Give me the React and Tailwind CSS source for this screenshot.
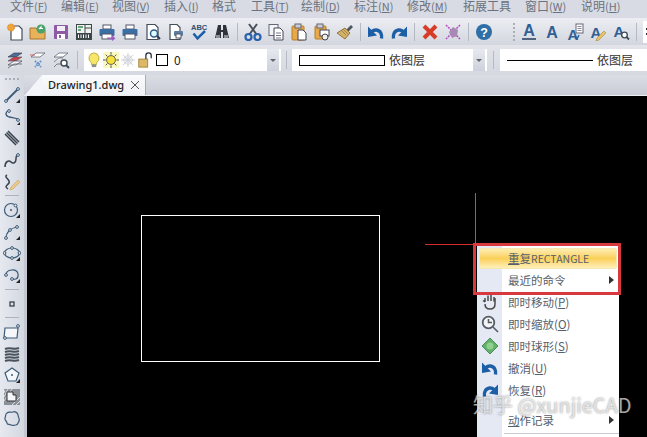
import React from 'react';

const FONT = 'font-["Noto_Sans_CJK_SC","Noto_Sans",sans-serif]';

const menus = [
    ['文件', 'F', 'w-[51px]'],
    ['编辑', 'E', 'w-[51px]'],
    ['视图', 'V', 'w-[52px]'],
    ['插入', 'I', 'w-[48px]'],
    ['格式', '', 'w-[39px]'],
    ['工具', 'T', 'w-[50px]'],
    ['绘制', 'D', 'w-[53px]'],
    ['标注', 'N', 'w-[53px]'],
    ['修改', 'M', 'w-[56px]'],
    ['拓展工具', '', 'w-[62px]'],
    ['窗口', 'W', 'w-[56px]'],
    ['说明', 'H', 'w-[50px]'],
];

const Svg = ({ children, size = 18 }) => (
    <svg width={size} height={size} viewBox="0 0 18 18" fill="none" className="shrink-0">
        {children}
    </svg>
);

const Sheet = ({ x = 5, y = 3, w = 10, h = 13 }) => (
    <path d={`M${x} ${y}h${w - 3}l3 3v${h - 3}h-${w}z`} fill="#fff" stroke="#444c58" strokeWidth="1.2" />
);

const Printer = ({ tone = '#3a6ea5' }) => (
    <>
        <rect x="5" y="2" width="8" height="4" fill="#fff" stroke="#556" />
        <rect x="1.5" y="6" width="15" height="7" rx="1" fill={tone} />
        <rect x="4" y="11" width="10" height="5" fill="#fff" stroke="#556" />
    </>
);

const icons = {
    newFile: (
        <Svg>
            <Sheet x={5} y={3} w={11} h={14} />
            <circle cx="5" cy="4.5" r="3.5" fill="#f0a43a" stroke="#d9822b" strokeDasharray="1.5 1" />
        </Svg>
    ),
    open: (
        <Svg>
            <path d="M1 5h6l2 2h7v9H1z" fill="#e8b25a" stroke="#a8742a" />
            <circle cx="12" cy="6" r="4.5" fill="#4aa36a" />
            <path d="M10 6l2-2v1.5h2" stroke="#fff" strokeWidth="1.2" />
        </Svg>
    ),
    save: (
        <Svg>
            <rect x="2" y="2" width="14" height="14" rx="1" fill="#8d5aa5" />
            <rect x="5" y="3" width="8" height="5" fill="#f3eef6" />
            <rect x="5" y="11" width="8" height="5" fill="#fff" />
            <rect x="7" y="12" width="2" height="3" fill="#8d5aa5" />
        </Svg>
    ),
    acis: (
        <Svg>
            <rect x="1.5" y="1.5" width="15" height="15" fill="#eef1ef" stroke="#3c4a48" />
            <path d="M3 4h5M3 7h3" stroke="#3a8a5a" strokeWidth="1.5" />
            <path d="M10 2v8M10 5h6" stroke="#3c4a48" />
            <rect x="2" y="10" width="14" height="6" fill="#39454a" />
            <path d="M3.5 15v-3.5M6 15v-3.5M8.5 15v-3.5M11 15v-3.5M13.5 15v-3.5" stroke="#fff" />
        </Svg>
    ),
    printTo: (
        <Svg>
            <Printer />
            <path d="M9 14.5h5v-2.5l3.5 3.5-3.5 2.500v-2h-5z" fill="#9a5fc0" />
        </Svg>
    ),
    print: <Svg><Printer /></Svg>,
    preview: (
        <Svg>
            <Sheet x={3} y={1.500} w={11} h={15} />
            <circle cx="10" cy="10.500" r="3.500" fill="#dff" stroke="#2f5e8c" strokeWidth="1.500" />
            <path d="M13 13l3 3" stroke="#2f3c4c" strokeWidth="2" />
        </Svg>
    ),
    pageSetup: (
        <Svg>
            <Sheet x={3} y={1.500} w={10} h={15} />
            <rect x="7" y="8" width="9" height="5" rx="1" fill="#5b7ea6" />
            <rect x="9" y="11" width="5" height="4" fill="#fff" stroke="#556" />
        </Svg>
    ),
    spell: (
        <Svg>
            <text x="1" y="7" fontSize="7.500" fontWeight="700" fill="#33506e" fontFamily="Liberation Sans">ABC</text>
            <path d="M3.500 10.500l4 5 7.500-7.500" stroke="#1f5fa8" strokeWidth="2.500" />
        </Svg>
    ),
    binoculars: (
        <Svg>
            <path d="M5 2h3v5h2V2h3l3 13h-6V9H8v6H2z" fill="#30343a" />
            <rect x="3" y="12" width="4" height="3" fill="#8a8f98" />
            <rect x="11" y="12" width="4" height="3" fill="#8a8f98" />
        </Svg>
    ),
    cut: (
        <Svg>
            <path d="M5 1l8 11M13 1L5 12" stroke="#4a5058" strokeWidth="2" />
            <circle cx="4.500" cy="14" r="3" stroke="#2a62ab" strokeWidth="2.200" />
            <circle cx="13.500" cy="14" r="3" stroke="#2a62ab" strokeWidth="2.200" />
        </Svg>
    ),
    copy: (
        <Svg>
            <rect x="2" y="1.500" width="9" height="11" fill="#f3f4f6" stroke="#667" />
            <path d="M7 5h6l3 3v9H7z" fill="#fff" stroke="#445" />
            <path d="M9 10h5M9 12.500h5M9 15h5" stroke="#778" />
        </Svg>
    ),
    paste: (
        <Svg>
            <rect x="2" y="3" width="12" height="14" rx="1" fill="#e8a94a" stroke="#b67c25" />
            <rect x="5" y="1" width="6" height="4" fill="#c9cdd4" stroke="#667" />
            <path d="M8 7h5l3 3v7H8z" fill="#fff" stroke="#445" />
        </Svg>
    ),
    pasteBlock: (
        <Svg>
            <rect x="2" y="3" width="11" height="13" rx="1" fill="#e8a94a" stroke="#b67c25" />
            <rect x="4" y="1" width="6" height="4" fill="#c9cdd4" stroke="#667" />
            <rect x="7" y="7" width="9" height="6" fill="#fff" stroke="#445" />
            <circle cx="12" cy="14" r="3" stroke="#444" fill="#eee" />
        </Svg>
    ),
    brush: (
        <Svg>
            <path d="M10 7l5-5 2 2-5 5z" fill="#4c5560" />
            <path d="M9 5l5 5-5 6-8-6z" fill="#d2b26a" stroke="#96763a" />
            <path d="M5 7l5 5M7 6l5 5" stroke="#96763a" strokeWidth=".7" />
        </Svg>
    ),
    undo: (
        <Svg>
            <path d="M14.500 15.500c.8-4-1-8-5-8.500-2-.2-3.500.5-4.500 1.500" stroke="#1d5fa6" strokeWidth="3.400" />
            <path d="M1 3.500V14l9-1.500z" fill="#1d5fa6" />
        </Svg>
    ),
    redo: (
        <Svg>
            <path d="M3.500 15.500c-.8-4 1-8 5-8.500 2-.2 3.500.5 4.500 1.500" stroke="#1d5fa6" strokeWidth="3.400" />
            <path d="M17 3.500V14l-9-1.500z" fill="#1d5fa6" />
        </Svg>
    ),
    erase: (
        <Svg>
            <path d="M3 3l12 12M15 3L3 15" stroke="#d63c26" strokeWidth="4" />
        </Svg>
    ),
    eraseAll: (
        <Svg>
            <path d="M2 2l14 14M16 2L2 16" stroke="#b54ac4" strokeWidth="1.500" strokeDasharray="2 1" />
            <path d="M5 9l4-5 5 3-1 6-5 2z" fill="#a78ab4" />
        </Svg>
    ),
    help: (
        <Svg>
            <circle cx="9" cy="9" r="8" fill="#2f6fa8" />
            <text x="9" y="13.500" textAnchor="middle" fontSize="12.500" fontWeight="700" fill="#fff" fontFamily="Liberation Sans">?</text>
        </Svg>
    ),
    textLine: (
        <Svg>
            <text x="9" y="13" textAnchor="middle" fontSize="16" fontWeight="700" fill="#2f5f94" fontFamily="Liberation Sans">A</text>
            <path d="M2 16h14" stroke="#223a5c" strokeWidth="1.500" />
        </Svg>
    ),
    text: (
        <Svg>
            <text x="9" y="14.500" textAnchor="middle" fontSize="16" fontWeight="700" fill="#2f5f94" fontFamily="Liberation Sans">A</text>
        </Svg>
    ),
    textEdit: (
        <Svg>
            <text x="7" y="17" textAnchor="middle" fontSize="15" fontWeight="700" fill="#2f5f94" fontFamily="Liberation Sans">A</text>
            <rect x="10" y="1" width="7" height="9" fill="#fff" stroke="#667" />
            <path d="M11.500 3.500h4M11.500 5.500h4M11.500 7.500h4" stroke="#889" />
            <path d="M13 12l-2 4-2-1" stroke="#2f5f94" strokeWidth="1.500" />
        </Svg>
    ),
    textPen: (
        <Svg>
            <text x="7" y="15" textAnchor="middle" fontSize="15" fontWeight="700" fill="#2f5f94" fontFamily="Liberation Sans">A</text>
            <path d="M8 15l7-7 2 2-7 7-3 1z" fill="#e5c26c" stroke="#a88a3c" strokeWidth=".6" />
        </Svg>
    ),
    textFind: (
        <Svg>
            <text x="7" y="14" textAnchor="middle" fontSize="15" fontWeight="700" fill="#2f5f94" fontFamily="Liberation Sans">A</text>
            <circle cx="12.500" cy="12" r="2.800" fill="#fff" stroke="#3c4a58" strokeWidth="1.300" />
            <path d="M14.500 14l2.500 2.500" stroke="#3c4a58" strokeWidth="1.800" />
        </Svg>
    ),
    layers: (
        <Svg>
            <path d="M2 6l6-4h8l-6 4z" fill="#4c6f9c" stroke="#334" strokeWidth=".6" />
            <path d="M2 10l6-4h8l-6 4z" fill="#c9434a" stroke="#556" strokeWidth=".6" />
            <path d="M2 14l6-4h8l-6 4zM2 17l6-4h8" stroke="#556" strokeWidth=".8" fill="#f4f5f7" />
        </Svg>
    ),
    layerMatch: (
        <Svg>
            <path d="M2 6l5-4h9l-5 4z" fill="#fff" stroke="#667" strokeWidth=".8" />
            <path d="M1 4h5" stroke="#c44" strokeWidth=".8" />
            <path d="M6 10l6 6M12 10l-6 6" stroke="#5b8fc9" strokeWidth="2" strokeDasharray="1.500 1" />
        </Svg>
    ),
    layerFind: (
        <Svg>
            <path d="M2 6l5-4h9l-5 4zM2 11l5-4h4" fill="#fff" stroke="#667" strokeWidth=".8" />
            <path d="M2 16l3-3h4" stroke="#667" strokeWidth=".8" />
            <circle cx="12" cy="12" r="3" fill="#fff" stroke="#3c4a58" strokeWidth="1.400" />
            <path d="M14 14l3 3" stroke="#3c4a58" strokeWidth="2" />
        </Svg>
    ),
};

const LINE = '#3c5a76';
const dot = (cx, cy) => <circle cx={cx} cy={cy} r="1.400" fill="#e8ecf3" stroke={LINE} />;
const Flag = () => <path d="M17 17h-4l4-4z" fill="#222" />;

const leftTools = [
    <Svg key="line"><path d="M3 15L15 3" stroke={LINE} strokeWidth="1.800" />{dot(3, 15)}{dot(15, 3)}<Flag /></Svg>,
    <Svg key="pline"><path d="M6 2C1 5 3 8 6 9c4 1 7 0 10 3" stroke={LINE} strokeWidth="1.300" />{dot(6, 3)}{dot(15, 12)}<path d="M17 17h-3l3-3z" fill="#222" /></Svg>,
    <Svg key="mline"><path d="M2 5l11 11M5 2l11 11M3.500 3.500l11 11" stroke="#39424c" strokeWidth="1.500" /></Svg>,
    <Svg key="spline"><path d="M2 16c0-6 4-7 6-5s5 1 5-3 1-4 2-4" stroke="#39424c" strokeWidth="1.500" />{dot(15, 4)}</Svg>,
    <Svg key="sketch"><path d="M4 2c-4 2 4 5 2 8s-5 3-1 6" stroke="#39424c" strokeWidth="1.500" /><path d="M8 14l7-7 2 2-7 7-3 1z" fill="#ecc98a" stroke="#c4a25c" strokeWidth=".6" /></Svg>,
    'sep',
    <Svg key="circle"><circle cx="8" cy="9" r="6.500" stroke={LINE} strokeWidth="1.200" /><path d="M7 9h2M8 8v2" stroke={LINE} />{dot(12.500, 4.500)}<Flag /></Svg>,
    <Svg key="arc"><path d="M3 16c0-7 5-11 11-12" stroke={LINE} strokeWidth="1.200" />{dot(3, 15)}{dot(7, 7)}{dot(14, 4)}<Flag /></Svg>,
    <Svg key="ellipse"><ellipse cx="9" cy="9" rx="7.500" ry="5" stroke={LINE} strokeWidth="1.200" />{dot(9, 4)}{dot(1.500, 9)}{dot(16.500, 9)}{dot(9, 14)}<Flag /></Svg>,
    <Svg key="earc"><path d="M3 9C3 3 14 2 15 8s-5 6-7 4" stroke={LINE} strokeWidth="1.200" />{dot(3, 9)}{dot(9, 13)}<Flag /></Svg>,
    'sep',
    <Svg key="point"><rect x="7" y="7" width="4" height="4" stroke="#39424c" strokeWidth="1.300" /></Svg>,
    'sep',
    <Svg key="rect"><path d="M2 5h13l-1 10H1z" fill="#f4f6fa" stroke={LINE} strokeWidth="1.200" />{dot(15, 3)}{dot(2, 15)}</Svg>,
    <Svg key="hatch"><path d="M2 4c5-2 9 1 14-1M2 7c5-2 9 1 14-1M2 10c5-2 9 1 14-1M2 13c5-2 9 1 14-1M2 16c5-2 9 1 14-1" stroke="#4a535c" strokeWidth="2" /></Svg>,
    <Svg key="polygon"><path d="M9 2l7 5-3 8H5L2 7z" fill="#f4f6fa" stroke={LINE} strokeWidth="1.200" /><path d="M8 9h2M9 8v2" stroke={LINE} /><Flag /></Svg>,
    <Svg key="region"><path d="M1 1h16v16H1z" fill="#8a9098" /><path d="M2 2l-1 3M5 1L1 9M9 1L1 13M17 9l-8 8M17 13l-4 4" stroke="#fff" strokeWidth=".7" /><path d="M4 4h6v3h3v6H4z" fill="#f4f6fa" stroke="#333" /></Svg>,
    <Svg key="cloud"><path d="M4 3c2-2 4 0 6-1s5 1 5 3 2 4 1 6-1 4-3 4-3 1-5 0-4 0-4-2-3-3-2-5 0-4 2-5z" stroke={LINE} strokeWidth="1.200" /></Svg>,
];

const rowOne = [
    'newFile', 'open', 'save', 'acis', 'printTo', 'print', 'preview', 'pageSetup', 'spell', 'binoculars', 'sep',
    'cut', 'copy', 'paste', 'pasteBlock', 'brush', 'sep', 'undo', 'redo', 'sep', 'erase', 'eraseAll', 'sep', 'help',
    'grip', 'textLine', 'text', 'textEdit', 'textPen', 'textFind', 'sep',
];

const Separator = () => <div className="w-px h-[18px] bg-[#b4b9c4] shrink-0" />;

const DropArrow = () => (
    <div className="w-[14px] self-stretch ml-auto bg-gradient-to-b from-[#e7e9ef] to-[#cdd1db] border-r-2 border-white flex items-center justify-center">
        <div className="w-0 h-0 border-x-[3px] border-x-transparent border-t-[3px] border-t-[#666]" />
    </div>
);

const BulbIcon = () => (
    <Svg size={16}>
        <path d="M9 1a6 6 0 0 0-3 11v2h6v-2A6 6 0 0 0 9 1z" fill="#f7e66a" stroke="#b8a83a" />
        <rect x="6.500" y="14" width="5" height="3" fill="#8c8f94" />
    </Svg>
);

const SunIcon = () => (
    <Svg size={16}>
        <rect x="0" y="0" width="18" height="18" fill="#fafac0" />
        <circle cx="9" cy="9" r="5" fill="#f6e03a" stroke="#555" />
        <path d="M9 0v3M9 15v3M0 9h3M15 9h3M3 3l2 2M13 13l2 2M3 15l2-2M13 5l2-2" stroke="#444" />
    </Svg>
);

const FreezeIcon = () => (
    <Svg size={16}>
        <circle cx="9" cy="9" r="5" fill="#eceef2" stroke="#c3c6cc" strokeDasharray="1 1" />
        <path d="M9 1v16M1 9h16M3 3l12 12M3 15L15 3" stroke="#ccd0d6" />
    </Svg>
);

const LockIcon = () => (
    <Svg size={16}>
        <rect x="2" y="8" width="10" height="9" fill="#dcb968" stroke="#a08238" />
        <path d="M10 8V4a3 3 0 0 1 6 0v3" stroke="#222c3c" strokeWidth="1.400" />
    </Svg>
);

const TAB_X = (
    <svg width="10" height="10" viewBox="0 0 10 10" fill="none">
        <path d="M1 1l8 8M9 1L1 9" stroke="#555" />
    </svg>
);

const MoveIcon = () => (
    <Svg>
        <path d="M4 9V5M7 8V2.500M10 8V2M13 8.500V4M4 9L2 7.500M4 11c0 3 2 5 5 5s5-2 5-5V5" stroke="#4a4a4a" strokeWidth="1.500" />
    </Svg>
);

const ZoomIcon = () => (
    <Svg>
        <circle cx="7.500" cy="7.500" r="5.800" fill="#f2f4f6" stroke="#555c64" strokeWidth="1.800" />
        <path d="M7.500 4v3.500H11M12 12l5 5" stroke="#555c64" strokeWidth="1.600" />
    </Svg>
);

const OrbitIcon = () => (
    <Svg>
        <path d="M9 1l8 8-8 8-8-8z" fill="#62b06a" stroke="#4a8f58" />
        <circle cx="9" cy="9" r="3.500" fill="#8ed08e" />
    </Svg>
);

const contextItems = [
    { icon: <MoveIcon />, label: '即时移动', key: 'P' },
    { icon: <ZoomIcon />, label: '即时缩放', key: 'O' },
    { icon: <OrbitIcon />, label: '即时球形', key: 'S' },
    { icon: icons.undo, label: '撤消', key: 'U' },
    { icon: icons.redo, label: '恢复', key: 'R' },
];

const SubArrow = () => (
    <div className="ml-auto mr-[3px] w-0 h-0 border-y-[4px] border-y-transparent border-l-[5px] border-l-[#333]" />
);

export default function App() {
    return (
        <div className={`w-[647px] h-[437px] overflow-hidden flex flex-col bg-[#d5d8e0] ${FONT}`}>
            {/* Menu bar */}
            <div className="h-[18px] shrink-0 bg-[#d8dbe3] flex items-start pl-[10px] text-[12px] leading-[12px] text-[#6b7280] whitespace-nowrap overflow-hidden">
                {menus.map(([name, key, width]) => (
                    <span key={name} className={`shrink-0 ${width}`}>
                        {name}
                        {key && <span className="text-[11px]">(<span className="underline">{key}</span>)</span>}
                    </span>
                ))}
            </div>

            {/* Standard toolbar */}
            <div className="h-[27px] shrink-0 bg-gradient-to-b from-[#eceef3] to-[#d3d6de] flex items-center pl-[6px] gap-[5px] overflow-hidden">
                {rowOne.map((name, i) => {
                    if (name === 'sep') return <div key={i} className="mx-[1px] shrink-0"><Separator /></div>;
                    if (name === 'grip') {
                        return <div key={i} className="w-[2px] h-[18px] ml-[15px] shrink-0 border-l-2 border-dotted border-[#a9aeb9]" />;
                    }
                    return <div key={i} className="shrink-0">{icons[name]}</div>;
                })}
                <div className="w-[8px] h-[22px] bg-white shrink-0 flex flex-col justify-center items-center gap-[3px]">
                    <div className="w-[2px] h-[2px] bg-[#333]" />
                    <div className="w-[2px] h-[2px] bg-[#333]" />
                </div>
            </div>

            {/* Layer toolbar */}
            <div className="h-[30px] shrink-0 bg-gradient-to-b from-[#e2e4ea] to-[#d5d8e0] flex items-center pl-[6px]">
                <div className="flex gap-[5px] items-center shrink-0">
                    {icons.layers}
                    {icons.layerMatch}
                    {icons.layerFind}
                </div>
                <div className="ml-[7px] mr-[6px] shrink-0"><Separator /></div>
                <div className="w-[197px] h-[22px] bg-white flex items-center pl-[2px] gap-[1px] shrink-0">
                    <BulbIcon />
                    <SunIcon />
                    <FreezeIcon />
                    <LockIcon />
                    <div className="w-[12px] h-[12px] border border-black ml-[2px]" />
                    <span className="ml-[5px] text-[12px] text-[#222]">0</span>
                    <DropArrow />
                </div>
                <div className="mx-[5px] shrink-0"><Separator /></div>
                <div className="w-[195px] h-[22px] bg-white flex items-center pl-[7px] shrink-0">
                    <div className="w-[86px] h-[11px] border border-black" />
                    <span className="ml-[4px] text-[12px] text-[#333]">依图层</span>
                    <DropArrow />
                </div>
                <div className="mx-[6px] shrink-0"><Separator /></div>
                <div className="flex-1 h-[22px] bg-white flex items-center pl-[7px] whitespace-nowrap">
                    <div className="w-[86px] h-px bg-black shrink-0" />
                    <span className="ml-[4px] text-[12px] text-[#333]">依图层</span>
                </div>
            </div>

            <div className="flex-1 flex min-h-0">
                {/* Draw toolbar */}
                <div className="w-[24px] shrink-0 bg-gradient-to-r from-[#e6e9f0] to-[#d3d7e0] flex flex-col items-center">
                    <div className="w-[14px] h-[2px] mt-[3px] mb-[2.300px] border-t-2 border-dotted border-[#a9aeb9] shrink-0" />
                    <div className="flex flex-col items-center gap-[3.700px] pt-[3.700px]">
                        {leftTools.map((tool, i) =>
                            tool === 'sep' ? (
                                <div key={i} className="w-[14px] h-px bg-[#aeb3bd] my-[1px] shrink-0" />
                            ) : (
                                tool
                            )
                        )}
                    </div>
                </div>

                <div className="flex-1 flex flex-col min-w-0">
                    {/* Document tabs */}
                    <div className="h-[21px] shrink-0 bg-gradient-to-b from-[#dcdee5] to-[#c9ccd6] flex items-end border-b border-[#eceef2]">
                        <div className="ml-[18px] w-[104px] h-[20px] bg-gradient-to-b from-[#fafbfc] to-[#eef0f4] border-r border-[#a8acb6] flex items-center pl-[6px] pr-[5px] relative">
                            <div className="absolute -left-[17px] bottom-0 w-0 h-0 border-l-[17px] border-l-transparent border-b-[20px] border-b-[#f4f5f8]" />
                            <span className="text-[11px] font-medium text-[#222] font-['Noto_Sans','Liberation_Sans',sans-serif]">Drawing1.dwg</span>
                            <div className="ml-auto">{TAB_X}</div>
                        </div>
                    </div>

                    <div className="flex-1 flex min-h-0">
                        <div className="w-[3px] shrink-0 bg-[#c3c7d1]" />

                        {/* Drawing area */}
                        <div className="flex-1 bg-black relative overflow-hidden">
                            <div className="absolute left-[114px] top-[119px] w-[239px] h-[147px] border border-white" />
                            <div className="absolute left-[448px] top-[97px] w-px h-[51px] bg-[#00c000]" />
                            <div className="absolute left-[398px] top-[148px] w-[51px] h-px bg-[#d42a2a]" />

                            {/* Context menu */}
                            <div className="absolute left-[450px] top-[150px] w-[142px] bg-white pt-[2px] text-[11.500px] text-[#56606c] leading-[22px]">
                                <div className="absolute left-0 top-0 bottom-0 w-[25px] bg-[#e5e9f3]" />
                                <div className="relative h-[21px] mx-[2px] rounded-[2px] bg-gradient-to-b from-[#fdecb0] via-[#fbd056] to-[#fff0b8] border border-[#f6e6b0] flex items-center pl-[28px] leading-none">
                                    <span><span className="underline">重</span>复<span className="text-[10.500px]">RECTANGLE</span></span>
                                </div>
                                <div className="relative h-[22px] flex items-center pl-[31px] pr-[2px]">
                                    最近的命令
                                    <SubArrow />
                                </div>
                                {contextItems.map(item => (
                                    <div key={item.key} className="relative h-[22px] flex items-center pl-[3px]">
                                        <div className="w-[19px] flex justify-center shrink-0">{item.icon}</div>
                                        <span className="ml-[9px]">
                                            {item.label}(<span className="underline">{item.key}</span>)
                                        </span>
                                    </div>
                                ))}
                                <div className="relative h-[8px]" />
                                <div className="relative h-[22px] flex items-center pl-[31px] pr-[2px]">
                                    <span><span className="underline">动</span>作记录</span>
                                    <SubArrow />
                                </div>
                                <div className="relative h-px bg-[#c8cbd2] ml-[27px] mt-[2px]" />
                                <div className="h-[4px]" />
                            </div>

                            {/* Red annotation frame */}
                            <div className="absolute left-[446px] top-[147px] w-[148px] h-[52px] border-[3px] border-[#d8393f]" />

                            {/* Zhihu watermark */}
                            <div className="absolute left-[446px] top-[296px] text-[20px] leading-[26px] text-white/65 [text-shadow:0_0_2px_rgba(0,0,0,0.5)] whitespace-nowrap">
                                知乎 @xunjieCAD
                            </div>
                        </div>
                    </div>
                </div>
            </div>
        </div>
    );
}
